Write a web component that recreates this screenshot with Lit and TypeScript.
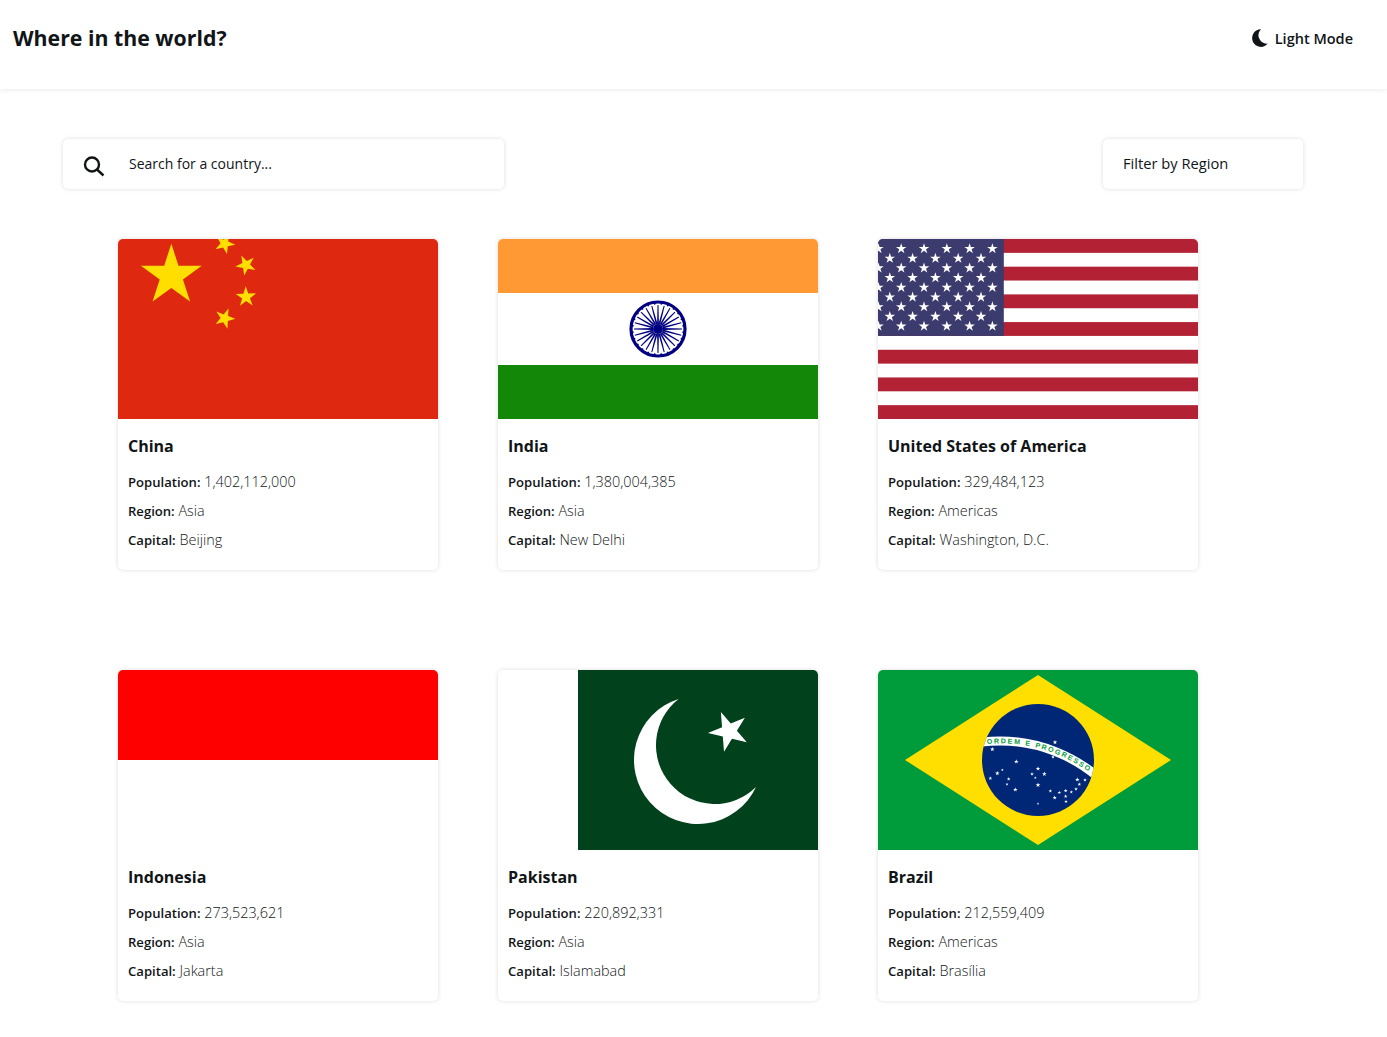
import { LitElement, html, css, svg } from 'lit';
import { customElement } from 'lit/decorators.js';

// five pointed star, rot in degrees from straight up
const starPoints = (cx: number, cy: number, r: number, rot = 0) => {
  const pts: string[] = [];
  for (let i = 0; i < 10; i++) {
    const rad = i % 2 ? r * 0.382 : r;
    const a = ((rot + i * 36 - 90) * Math.PI) / 180;
    pts.push(`${(cx + rad * Math.cos(a)).toFixed(2)},${(cy + rad * Math.sin(a)).toFixed(2)}`);
  }
  return pts.join(' ');
};

const flagChina = () => html`<svg class="flag" viewBox="0 0 30 20" preserveAspectRatio="xMidYMid slice">
  <rect width="30" height="20" fill="#de2910"></rect>
  <polygon fill="#ffde00" points=${starPoints(5, 5, 3)}></polygon>
  <polygon fill="#ffde00" points=${starPoints(10, 2, 1, 23)}></polygon>
  <polygon fill="#ffde00" points=${starPoints(12, 4, 1, 46)}></polygon>
  <polygon fill="#ffde00" points=${starPoints(12, 7, 1, 70)}></polygon>
  <polygon fill="#ffde00" points=${starPoints(10, 9, 1, 21)}></polygon>
</svg>`;

const flagIndia = () => {
  const spokes = [];
  for (let i = 0; i < 24; i++) {
    const rot = i * 15;
    spokes.push(svg`<polygon fill="#000080" transform="rotate(${rot} 160 90)" points="159.1,85 160.9,85 160.5,66 159.5,66"></polygon>`);
    spokes.push(svg`<circle fill="#000080" cx="160" cy="64.5" r="1" transform="rotate(${rot + 7.5} 160 90)"></circle>`);
  }
  return html`<svg class="flag" viewBox="0 0 320 180">
    <rect width="320" height="180" fill="#fff"></rect>
    <rect width="320" height="54" fill="#ff9933"></rect>
    <rect y="126" width="320" height="54" fill="#138808"></rect>
    <circle cx="160" cy="90" r="27" fill="#fff" stroke="#000080" stroke-width="3.2"></circle>
    ${spokes}
    <circle cx="160" cy="90" r="5" fill="#000080"></circle>
  </svg>`;
};

const flagUsa = () => {
  const stars = [];
  for (let row = 0; row < 9; row++) {
    const count = row % 2 ? 5 : 6;
    for (let col = 0; col < count; col++) {
      const x = (row % 2 ? 494 : 247) + col * 494;
      stars.push(svg`<polygon fill="#fff" points=${starPoints(x, 210 + row * 210, 120)}></polygon>`);
    }
  }
  const stripes = [];
  for (let i = 0; i < 7; i++) {
    stripes.push(svg`<rect y=${i * 600} width="7410" height="300" fill="#b22234"></rect>`);
  }
  return html`<svg class="flag" viewBox="0 0 7410 3900" preserveAspectRatio="xMidYMid slice">
    <rect width="7410" height="3900" fill="#fff"></rect>
    ${stripes}
    <rect width="2964" height="2100" fill="#3c3b6e"></rect>
    ${stars}
  </svg>`;
};

const flagIndonesia = () => html`<svg class="flag" viewBox="0 0 320 180">
  <rect width="320" height="180" fill="#fff"></rect>
  <rect width="320" height="90" fill="#ff0000"></rect>
</svg>`;

const flagPakistan = () => html`<svg class="flag" viewBox="0 0 320 180">
  <rect width="320" height="180" fill="#fff"></rect>
  <rect x="80" width="240" height="180" fill="#01411c"></rect>
  <path fill="#fff" d="M180.6 29A64 64 0 1 0 258 117A58.7 58.7 0 1 1 180.6 29Z"></path>
  <polygon fill="#fff" points=${starPoints(230.9, 61.4, 21, -22.5)}></polygon>
</svg>`;

// positions read off a 3x crop of the blue disc, with radius
const brazilStars: [number, number, number][] = [
  [255, 142, 2.4], [67, 163, 2.4], [249, 186, 2], [139, 200, 2.4], [97, 225, 1.5], [82, 235, 2.4],
  [61, 250, 2], [116, 252, 2], [111, 268, 1.5], [136, 284, 2.4], [204, 221, 2.4], [186, 237, 2],
  [196, 248, 1.5], [223, 237, 2.4], [204, 270, 2.6], [204, 326, 1.3], [241, 288, 2], [268, 293, 1.8],
  [254, 308, 2.2], [287, 287, 2], [304, 291, 1.8], [318, 282, 2], [322, 254, 2.4], [345, 255, 2],
  [328, 268, 2], [287, 304, 2], [288, 320, 1.8],
];

const flagBrazil = () => html`<svg class="flag" viewBox="0 0 320 180">
  <defs>
    <clipPath id="disc"><circle cx="160" cy="90" r="56"></circle></clipPath>
    <path id="motto" d="M98 75.5A148.6 148.6 0 0 1 222 111"></path>
  </defs>
  <rect width="320" height="180" fill="#009b3a"></rect>
  <polygon fill="#fedf00" points="27,90 160,5 293,90 160,175"></polygon>
  <circle cx="160" cy="90" r="56" fill="#002776"></circle>
  <g clip-path="url(#disc)">
    <circle cx="122" cy="222" r="151" fill="none" stroke="#fff" stroke-width="9"></circle>
  </g>
  ${brazilStars.map(([x, y, r]) => svg`<polygon fill="#fff" points=${starPoints(92 + x / 3, 25 + y / 3, r)}></polygon>`)}
  <text class="motto" fill="#009b3a"><textPath href="#motto" startOffset="11">ORDEM E PROGRESSO</textPath></text>
</svg>`;

const countries = [
  { name: 'China', population: '1,402,112,000', region: 'Asia', capital: 'Beijing', flag: flagChina },
  { name: 'India', population: '1,380,004,385', region: 'Asia', capital: 'New Delhi', flag: flagIndia },
  { name: 'United States of America', population: '329,484,123', region: 'Americas', capital: 'Washington, D.C.', flag: flagUsa },
  { name: 'Indonesia', population: '273,523,621', region: 'Asia', capital: 'Jakarta', flag: flagIndonesia },
  { name: 'Pakistan', population: '220,892,331', region: 'Asia', capital: 'Islamabad', flag: flagPakistan },
  { name: 'Brazil', population: '212,559,409', region: 'Americas', capital: 'Brasília', flag: flagBrazil },
];

@customElement('app-root')
export class AppRoot extends LitElement {
  static styles = css`
    :host {
      display: block;
      min-height: 1037px;
      background: #fff;
      color: #111517;
      font-family: 'Open Sans', 'Noto Sans', sans-serif;
    }

    .topbar {
      height: 89px;
      padding: 0 34px 0 13px;
      box-sizing: border-box;
      display: flex;
      align-items: center;
      justify-content: space-between;
      box-shadow: 0 2px 4px rgba(0, 0, 0, 0.06);
    }

    .topbar h1 {
      margin: 0 0 14px;
      font-size: 21.3px;
      font-weight: 700;
    }

    .mode {
      display: flex;
      align-items: center;
      gap: 7px;
      margin-bottom: 12px;
      font-size: 14.5px;
      font-weight: 600;
    }

    .mode svg {
      width: 16px;
      height: 18px;
      margin-top: -2px;
    }

    .toolbar {
      margin: 50px 84px 50px 63px;
      display: flex;
      justify-content: space-between;
    }

    .box {
      height: 50px;
      box-sizing: border-box;
      border-radius: 5px;
      box-shadow: 0 0 4px rgba(0, 0, 0, 0.14);
      display: flex;
      align-items: center;
      font-size: 14px;
    }

    .box span,
    .filter {
      padding-bottom: 2px;
    }

    .search {
      width: 441px;
      padding-left: 20px;
      gap: 24px;
    }

    .search svg {
      width: 22px;
      height: 22px;
      margin-top: 3px;
    }

    .filter {
      width: 200px;
      padding-left: 20px;
      font-size: 14.7px;
    }

    .grid {
      padding-left: 118px;
      display: grid;
      grid-template-columns: repeat(3, 320px);
      column-gap: 60px;
      row-gap: 100px;
    }

    .card {
      height: 331px;
      border-radius: 5px;
      overflow: hidden;
      box-shadow: 0 0 4px rgba(0, 0, 0, 0.14);
    }

    .flag {
      display: block;
      width: 320px;
      height: 180px;
    }

    .motto {
      font-family: 'Liberation Sans', sans-serif;
      font-size: 7px;
      font-weight: 700;
      letter-spacing: 1.7px;
    }

    .info {
      padding: 17px 10px 0;
    }

    .info h2 {
      margin: 0 0 15px;
      font-size: 16px;
      line-height: 21px;
      font-weight: 700;
    }

    .info p {
      margin: 0 0 9px;
      font-size: 14.4px;
      line-height: 19px;
      font-weight: 300;
    }

    .info b {
      font-size: 13.1px;
      font-weight: 600;
    }
  `;

  render() {
    return html`
      <header class="topbar">
        <h1>Where in the world?</h1>
        <div class="mode">
          <svg viewBox="0 0 16 18"><path fill="#111517" d="M9 .3A8.8 8.8 0 1 0 15.8 14.6A8.4 8.4 0 0 1 9 .3Z"></path></svg>
          <span>Light Mode</span>
        </div>
      </header>
      <div class="toolbar">
        <div class="box search">
          <svg viewBox="0 0 22 22" fill="none" stroke="#111517" stroke-width="2.4">
            <circle cx="9" cy="9.5" r="7"></circle>
            <path d="M14 14.5l6.5 6"></path>
          </svg>
          <span>Search for a country...</span>
        </div>
        <div class="box filter">Filter by Region</div>
      </div>
      <main class="grid">
        ${countries.map(
          (c) => html`
            <article class="card">
              ${c.flag()}
              <div class="info">
                <h2>${c.name}</h2>
                <p><b>Population:</b> ${c.population}</p>
                <p><b>Region:</b> ${c.region}</p>
                <p><b>Capital:</b> ${c.capital}</p>
              </div>
            </article>
          `
        )}
      </main>
    `;
  }
}
